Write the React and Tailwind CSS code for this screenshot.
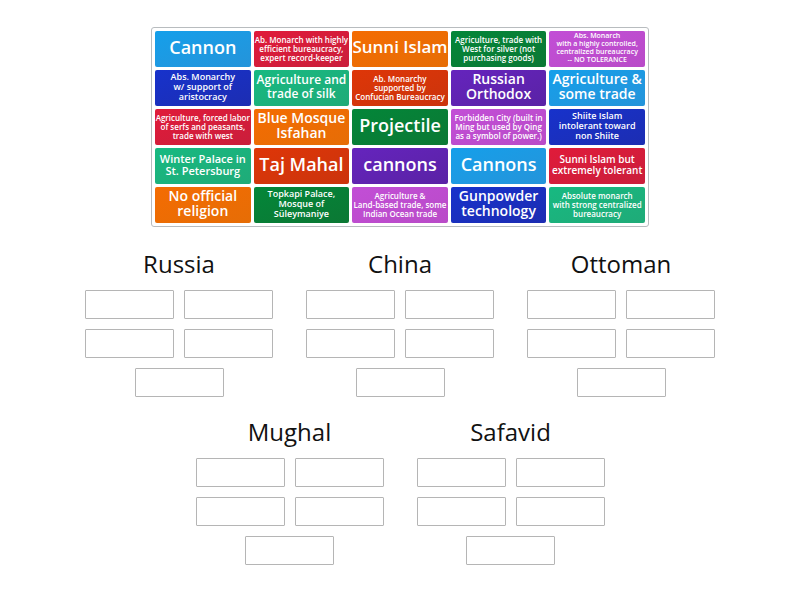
const SIZES = {
  xs: "pb-[2px] text-[7px] leading-[8px]",
  sm: "pb-[2px] text-[8px] leading-[9px]",
  md: "pb-[3px] text-[9px] leading-[10px]",
  base: "pb-[3px] text-[10px] leading-[11px]",
  lg: "pb-[3px] text-[11px] leading-[12px]",
  xl: "pb-[3px] text-[12px] leading-[14px]",
  "2xl": "pb-[4px] text-[14px] leading-[15px]",
  "3xl": "pb-[4px] text-[17px] leading-[20px]",
  "4xl": "pb-[4px] text-[18px] leading-[20px]",
};

const COLORS = {
  sky: "from-[#149fea] to-[#2494da]",
  red: "from-[#e01b3a] to-[#ca1e3b]",
  orange: "from-[#f46c02] to-[#e66d06]",
  green: "from-[#038639] to-[#0b7834]",
  pink: "from-[#c24ed6] to-[#b94bc8]",
  blue: "from-[#1732cb] to-[#1c2db2]",
  mint: "from-[#17b981] to-[#1fab78]",
  vermilion: "from-[#de3608] to-[#cb340c]",
  purple: "from-[#6524bd] to-[#5a22a5]",
};

const TILES = [
  ["Cannon", "sky", "4xl"],
  ["Ab. Monarch with highly\nefficient bureaucracy,\nexpert record-keeper", "red", "sm"],
  ["Sunni Islam", "orange", "3xl"],
  ["Agriculture, trade with\nWest for silver (not\npurchasing goods)", "green", "sm"],
  ["Abs. Monarch\nwith a highly controlled,\ncentralized bureaucracy\n-- NO TOLERANCE", "pink", "xs"],
  ["Abs. Monarchy\nw/ support of\naristocracy", "blue", "md"],
  ["Agriculture and\ntrade of silk", "mint", "xl"],
  ["Ab. Monarchy\nsupported by\nConfucian Bureaucracy", "vermilion", "sm"],
  ["Russian\nOrthodox", "purple", "2xl"],
  ["Agriculture &\nsome trade", "sky", "2xl"],
  ["Agriculture, forced labor\nof serfs and peasants,\ntrade with west", "red", "sm"],
  ["Blue Mosque\nIsfahan", "orange", "2xl"],
  ["Projectile", "green", "4xl"],
  ["Forbidden City (built in\nMing but used by Qing\nas a symbol of power.)", "pink", "sm"],
  ["Shiite Islam\nintolerant toward\nnon Shiite", "blue", "md"],
  ["Winter Palace in\nSt. Petersburg", "mint", "lg"],
  ["Taj Mahal", "vermilion", "4xl"],
  ["cannons", "purple", "4xl"],
  ["Cannons", "sky", "4xl"],
  ["Sunni Islam but\nextremely tolerant", "red", "base"],
  ["No official\nreligion", "orange", "2xl"],
  ["Topkapi Palace,\nMosque of\nSüleymaniye", "green", "md"],
  ["Agriculture &\nLand-based trade, some\nIndian Ocean trade", "pink", "sm"],
  ["Gunpowder\ntechnology", "blue", "2xl"],
  ["Absolute monarch\nwith strong centralized\nbureaucracy", "mint", "sm"],
];

const GROUPS = ["Russia", "China", "Ottoman", "Mughal", "Safavid"];

function Tile({ text, color, size }) {
  return (
    <button
      type="button"
      className={`flex h-9 min-w-0 cursor-grab items-center justify-center rounded-[2px] bg-linear-to-br text-center font-semibold whitespace-pre text-white ${COLORS[color]} ${SIZES[size]}`}
    >
      {text}
    </button>
  );
}

function Group({ name }) {
  return (
    <section className="w-[188px]">
      <h2 className="mb-[10px] text-center text-2xl leading-8 text-[#111]">{name}</h2>
      <ul className="flex flex-wrap justify-center gap-[10px]">
        {[1, 2, 3, 4, 5].map((slot) => (
          <li key={slot} className="h-[29px] w-[89px] rounded-[1px] border border-[#b5b5b5] bg-white" />
        ))}
      </ul>
    </section>
  );
}

export default function App() {
  return (
    <main className="min-h-screen bg-white px-4 pt-[27px] pb-8 font-['Open_Sans',sans-serif]">
      <div className="mx-auto grid max-w-[498px] grid-cols-5 gap-[3px] rounded-[3px] border border-[#b8bcbf] p-[3px]">
        {TILES.map(([text, color, size]) => (
          <Tile key={text} text={text} color={color} size={size} />
        ))}
      </div>
      <div className="mx-auto mt-[21px] flex max-w-[640px] flex-wrap justify-center gap-x-[33px] gap-y-[19px]">
        {GROUPS.map((name) => (
          <Group key={name} name={name} />
        ))}
      </div>
    </main>
  );
}
